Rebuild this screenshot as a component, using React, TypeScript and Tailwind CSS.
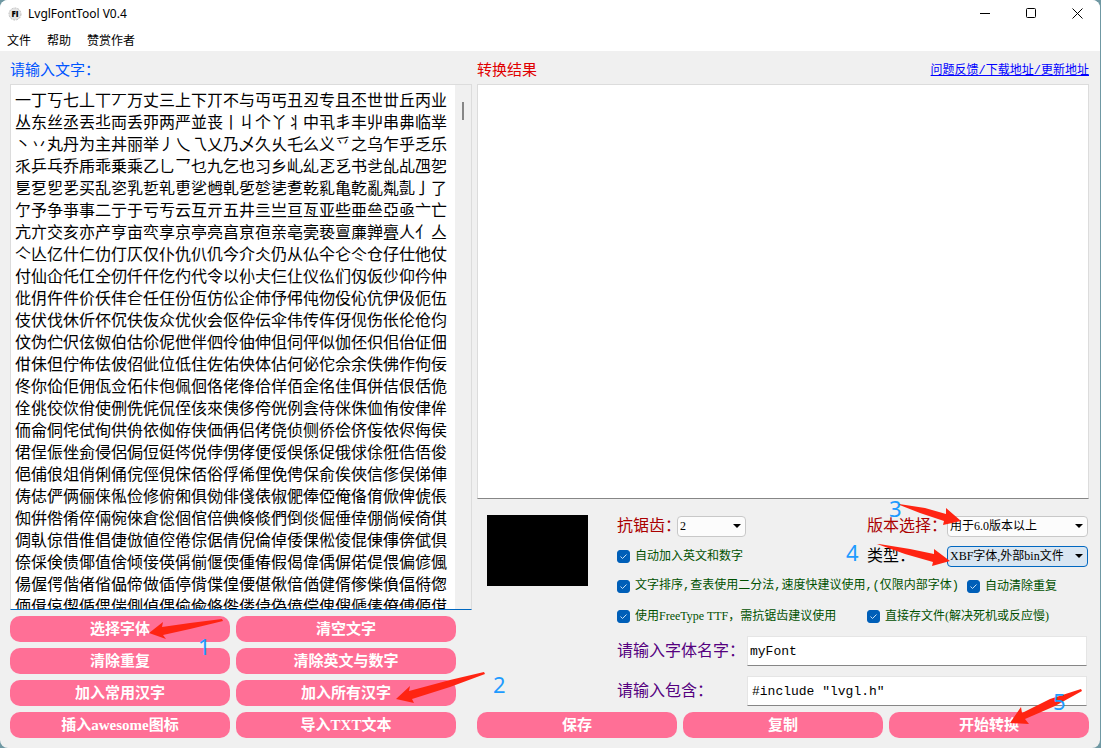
import { useState } from "react";

const cjk = "font-['Liberation_Serif','Noto_Sans_CJK_SC',serif]";
const ui = "font-['Noto_Sans','Noto_Sans_CJK_SC',sans-serif]";

const allChars = Array.from({ length: 2700 }, (_, i) => String.fromCodePoint(0x4e00 + i)).join("");

const leftButtons = [
  "选择字体", "清空文字",
  "清除重复", "清除英文与数字",
  "加入常用汉字", "加入所有汉字",
  "插入awesome图标", "导入TXT文本",
];

const arrows = [
  "222,619 223,621 190,629 163,635 166,639 149,633 163,622 162,627 190,623",
  "484,672 485,674 450,687 412,699 414,703 396,699 410,686 409,691 450,680",
  "897,504 899,504 925,508 946,514 946,508 961,521 943,525 944,521 920,513",
  "877,544 879,544 910,549 934,554 934,549 950,561 932,566 933,562 905,554",
  "1081,689 1082,691 1055,706 1025,719 1029,724 1010,723 1021,707 1022,713 1050,699",
];

const marks = [
  { n: "1", x: 198, y: 655 },
  { n: "2", x: 493, y: 693 },
  { n: "3", x: 889, y: 517 },
  { n: "4", x: 846, y: 561 },
  { n: "5", x: 1053, y: 710 },
];

const PinkButton = ({ text }: { text: string }) => (
  <button className={`${cjk} h-[26px] rounded-[10px] bg-[#ff6f96] text-[15px] leading-[26px] font-bold text-white`}>
    {text}
  </button>
);

const Check = ({ text, mono }: { text: string; mono?: boolean }) => {
  const [on, setOn] = useState(true);
  return (
    <label
      className={`flex items-center gap-[5px] text-xs whitespace-nowrap text-[#005000] ${
        mono ? "font-['Liberation_Mono','Noto_Sans_CJK_SC',monospace]" : cjk
      }`}
    >
      <span className="relative flex">
        <input
          type="checkbox"
          checked={on}
          onChange={() => setOn(!on)}
          className="size-[13px] appearance-none rounded-[3px] border border-[#005fb8] bg-white checked:bg-[#005fb8]"
        />
        <svg viewBox="0 0 13 13" className="pointer-events-none absolute inset-0 size-[13px]" fill="none" stroke="#c8e0f5">
          <path d="M3.5 6.5 5.5 8.5 9.5 4.5" />
        </svg>
      </span>
      {text}
    </label>
  );
};

type DropProps = { id: string; options: string[]; wide?: boolean; active?: boolean };

const Drop = ({ id, options, wide, active }: DropProps) => (
  <span className={`relative flex ${wide ? "w-[141px]" : "w-[69px]"}`}>
    <select
      id={id}
      className={`${cjk} h-[21px] w-full appearance-none rounded-[4px] border pl-0.5 text-xs text-black ${
        active ? "border-[#0067c0] bg-[#d9e6f2]" : "border-[#c8c8c8] bg-[#fcfcfc]"
      }`}
    >
      {options.map((o) => (
        <option key={o}>{o}</option>
      ))}
    </select>
    <svg viewBox="0 0 8 4" className="pointer-events-none absolute top-2 right-[5px] h-1 w-2">
      <path d="M0 0H8L4 4Z" fill="#000" />
    </svg>
  </span>
);

const App = () => {
  return (
    <div className="relative min-h-screen bg-[#6f98a3] pr-px">
      <div className="flex min-h-screen flex-col overflow-hidden rounded-lg bg-[#f0f0f0]">
        {/* Title bar + menu */}
        <header className={`${ui} bg-white text-xs text-black`}>
          <div className="flex h-[27px] items-center pl-2">
            <svg viewBox="0 0 14 14" className="size-[14px]">
              <circle cx="7" cy="7" r="6" fill="#e4e4e4" stroke="#bdbdbd" strokeDasharray="2 1" />
              <text x="7" y="10" textAnchor="middle" fontSize="8" fontWeight="900" fontFamily="Open Sans, sans-serif">
                FI
              </text>
            </svg>
            <h1 className="ml-1.5 flex-1">LvglFontTool V0.4</h1>
            <button aria-label="minimize" className="flex h-full w-[46px] items-center justify-center">
              <svg viewBox="0 0 11 11" className="size-[11px]" stroke="#000">
                <path d="M0 5.5H10" />
              </svg>
            </button>
            <button aria-label="maximize" className="flex h-full w-[46px] items-center justify-center">
              <svg viewBox="0 0 11 11" className="size-[11px]" fill="none" stroke="#000">
                <rect x="0.5" y="0.5" width="9" height="9" rx="1" />
              </svg>
            </button>
            <button aria-label="close" className="flex h-full w-[46px] items-center justify-center">
              <svg viewBox="0 0 11 11" className="size-[11px]" stroke="#000">
                <path d="M0.5 0.5 10.5 10.5M10.5 0.5 0.5 10.5" />
              </svg>
            </button>
          </div>
          <nav className="flex h-6 items-center gap-4 pt-1 pl-[7px]">
            <button>文件</button>
            <button>帮助</button>
            <button>赞赏作者</button>
          </nav>
        </header>

        <main className={`${cjk} flex gap-[5px] pr-[11px] pb-2.5 pl-2.5`}>
          {/* Left side */}
          <section className="flex w-[462px] flex-col">
            <label htmlFor="source" className="flex h-[33px] items-center pt-1.5 text-[15px] text-[#0055ff]">
              请输入文字：
            </label>
            <div className="flex h-[526px] border border-[#dcdcdc] border-b-[#0067c0] bg-white">
              <textarea
                id="source"
                defaultValue={allChars}
                spellCheck={false}
                className="flex-1 resize-none overflow-hidden pt-[3px] pl-1 font-['Noto_Sans_CJK_SC',sans-serif] text-base leading-[22px] break-all text-black outline-none"
              />
              <div className="flex w-4 justify-center bg-[#f0f0f0] pt-[17px]">
                <div className="h-[18px] w-0.5 bg-[#868686]" />
              </div>
            </div>
            <div className="mt-1.5 grid grid-cols-2 gap-1.5 pr-4">
              {leftButtons.map((b) => (
                <PinkButton key={b} text={b} />
              ))}
            </div>
          </section>

          {/* Right side */}
          <section className="flex flex-1 flex-col">
            <div className="flex h-[33px] items-center justify-between pt-1.5">
              <label htmlFor="result" className="text-[15px] text-[#e00000]">转换结果</label>
              <a href="#" className="font-['Liberation_Mono','Noto_Sans_CJK_SC',monospace] text-xs text-[#0000ff] underline">
                问题反馈/下载地址/更新地址
              </a>
            </div>
            <textarea
              id="result"
              className="h-[415px] w-full resize-none border border-[#dcdcdc] border-b-[#868686] bg-white p-1 text-base outline-none"
            />

            <div className="mt-3 flex pl-2.5">
              <div className="mt-1 h-[71px] w-[101px] bg-black" />
              <div className="ml-[29px] flex-1">
                <div className="flex h-[30px] items-center">
                  <label htmlFor="aa" className="w-[60px] text-base leading-4 whitespace-nowrap text-[#aa0000]">抗锯齿：</label>
                  <Drop id="aa" options={["2", "1", "4", "8"]} />
                  <div className="ml-auto flex w-[222px] items-center">
                    <label htmlFor="version" className="w-20 text-base leading-4 whitespace-nowrap text-[#aa0000]">版本选择：</label>
                    <Drop id="version" wide options={["用于6.0版本以上"]} />
                  </div>
                </div>
                <div className="flex h-[30px] items-center justify-between">
                  <Check text="自动加入英文和数字" />
                  <div className="flex w-[222px] items-center">
                    <label htmlFor="kind" className="w-20 text-base leading-4 text-black">类型：</label>
                    <Drop id="kind" wide active options={["XBF字体,外部bin文件"]} />
                  </div>
                </div>
                <div className="flex h-[30px] items-center justify-between">
                  <Check mono text="文字排序,查表使用二分法,速度快建议使用,(仅限内部字体)" />
                  <div className="w-[122px]">
                    <Check text="自动清除重复" />
                  </div>
                </div>
                <div className="flex h-[30px] items-center justify-between">
                  <Check text="使用FreeType TTF，需抗锯齿建议使用" />
                  <div className="w-[222px]">
                    <Check text="直接存文件(解决死机或反应慢)" />
                  </div>
                </div>
                <div className="mt-[5px] flex h-[30px] items-center pr-0.5">
                  <label htmlFor="name" className="w-[130px] text-base whitespace-nowrap text-[#55007f]">请输入字体名字：</label>
                  <input
                    id="name"
                    defaultValue="myFont"
                    className="h-full min-w-0 flex-1 border border-[#e5e5e5] border-b-[#868686] bg-white px-0.5 font-['Liberation_Mono',monospace] text-[13px] text-black outline-none"
                  />
                </div>
                <div className="mt-2.5 flex h-[30px] items-center pr-0.5">
                  <label htmlFor="include" className="w-[130px] text-base whitespace-nowrap text-[#55007f]">请输入包含：</label>
                  <input
                    id="include"
                    defaultValue={'#include "lvgl.h"'}
                    className="h-full min-w-0 flex-1 border border-[#e5e5e5] border-b-[#868686] bg-white px-1 font-['Liberation_Mono',monospace] text-[13px] text-black outline-none"
                  />
                </div>
              </div>
            </div>

            <div className="mt-1.5 grid grid-cols-3 gap-1.5">
              <PinkButton text="保存" />
              <PinkButton text="复制" />
              <PinkButton text="开始转换" />
            </div>
          </section>
        </main>
      </div>

      {/* Step markers drawn over the window */}
      <svg viewBox="0 0 1101 748" className="pointer-events-none absolute top-0 left-0 h-[748px] w-[1101px]">
        {arrows.map((p) => (
          <polygon key={p} points={p} fill="#ff2412" />
        ))}
        {marks.map((m) => (
          <text key={m.n} x={m.x} y={m.y} fontSize="22" fill="#1e9bff" fontFamily="Noto Sans, sans-serif">
            {m.n}
          </text>
        ))}
      </svg>
    </div>
  );
};

export default App;
